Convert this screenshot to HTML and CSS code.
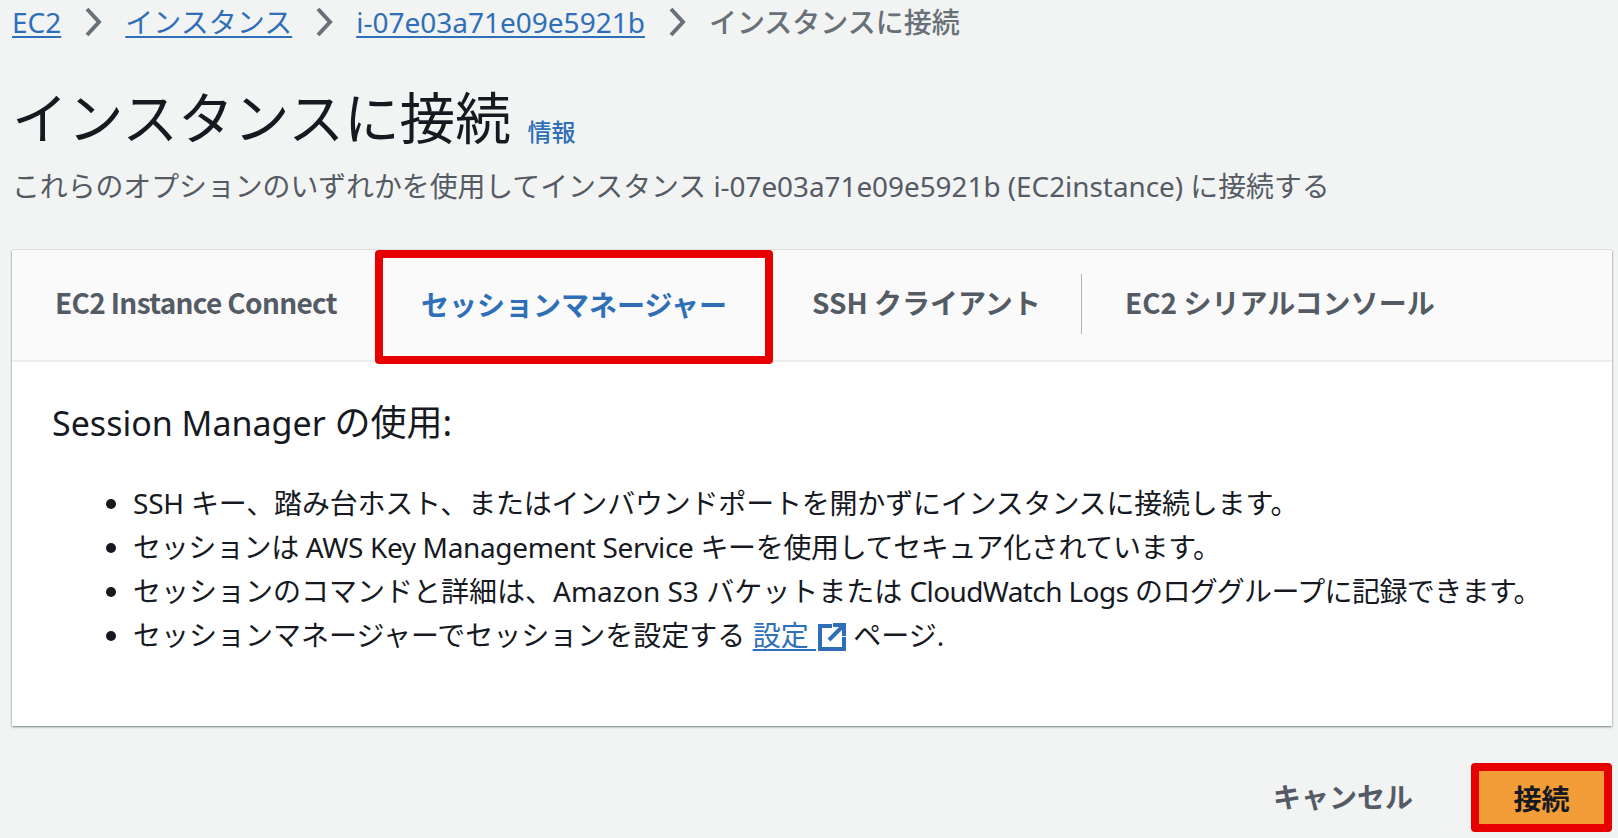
FILE: index.html
```html
<!DOCTYPE html>
<html lang="ja">
<head>
<meta charset="utf-8">
<title>インスタンスに接続</title>
<link rel="stylesheet" href="styles.css">
</head>
<body>
<div class="page">
  <nav class="crumbs">
    <a class="link" href="#">EC2</a>
    <svg class="chev" viewBox="0 0 20 32"><path d="M4 3l12 13L4 29"/></svg>
    <a class="link" href="#">インスタンス</a>
    <svg class="chev" viewBox="0 0 20 32"><path d="M4 3l12 13L4 29"/></svg>
    <a class="link" href="#">i-07e03a71e09e5921b</a>
    <svg class="chev" viewBox="0 0 20 32"><path d="M4 3l12 13L4 29"/></svg>
    <span class="crumb-current">インスタンスに接続</span>
  </nav>
  <header class="head">
    <h1 class="title">インスタンスに接続 <a class="info" href="#">情報</a></h1>
    <p class="sub">これらのオプションのいずれかを使用してインスタンス i-07e03a71e09e5921b (EC2instance) に接続する</p>
  </header>
  <section class="card">
    <div class="tabs">
      <div class="tab tab-first">EC2 Instance Connect</div>
      <div class="tab tab-active">セッションマネージャー</div>
      <div class="tab tab-ssh">SSH クライアント</div>
      <div class="tab tab-last">EC2 シリアルコンソール</div>
    </div>
    <div class="panel">
      <h2 class="panel-title">Session Manager <span class="panel-title-ja">の使用:</span></h2>
      <ul class="list">
        <li class="item-snug">SSH キー、踏み台ホスト、またはインバウンドポートを開かずにインスタンスに接続します。</li>
        <li class="item-tight">セッションは AWS Key Management Service キーを使用してセキュア化されています。</li>
        <li>セッションのコマンドと詳細は、Amazon S3 バケットまたは <span class="run-tight">CloudWatch Logs のロググループに記録できます。</span></li>
        <li>セッションマネージャーでセッションを設定する <a class="link" href="#">設定 <svg class="ext" viewBox="0 0 28 28"><path class="ext-box" d="M14 3H2v23h24V14"/><path class="ext-arrow" d="M11 17L25 3M15 2h11v11"/></svg></a> ページ.</li>
      </ul>
    </div>
  </section>
  <footer class="actions">
    <span class="cancel">キャンセル</span>
    <button class="primary" type="button">接続</button>
  </footer>
</div>
</body>
</html>
```
FILE: styles.css
```css
* { box-sizing: border-box; }
html, body { margin: 0; height: 100%; }
body {
  background: #f2f3f3;
  color: #16191f;
  font-family: "Noto Sans", "Noto Sans CJK JP", sans-serif;
  overflow: hidden;
}
.page {
  height: 838px;
  padding: 0 6px 0 12px;
  display: flex;
  flex-direction: column;
}
.link { color: #2f6fb7; text-decoration: underline; text-underline-offset: 3px; }
.crumbs {
  display: flex;
  align-items: center;
  height: 48px;
  padding-bottom: 4px;
  font-size: 28px;
  line-height: 44px;
}
.chev { width: 20px; height: 32px; margin: 0 22px; flex: none; }
.chev path { fill: none; stroke: #687078; stroke-width: 4; }
.crumb-current { color: #687078; font-weight: 500; font-size: 28px; }
.head { padding-top: 34px; }
.title {
  margin: 0;
  font-size: 55.7px;
  line-height: 70px;
  font-weight: 400;
  color: #16191f;
}
.info { font-size: 24px; font-weight: 500; color: #2f6fb7; text-decoration: none; margin-left: 2px; position: relative; top: 2px; }
.sub {
  margin: 2px 0 0;
  font-size: 27.85px;
  line-height: 38px;
  color: #545b64;
}
.card {
  margin-top: 45px;
  height: 476px;
  background: #fff;
  box-shadow: 0 1px 2px rgba(0,28,36,.5), 0 0 1px rgba(0,28,36,.3);
  display: flex;
  flex-direction: column;
}
.tabs {
  display: flex;
  height: 112px;
  background: #fafafa;
  border-bottom: 2px solid #eaeded;
  align-items: stretch;
}
.tab {
  display: flex;
  align-items: center;
  font-family: "Noto Sans CJK JP", sans-serif;
  font-size: 28px;
  font-weight: 700;
  color: #545b64;
  padding-bottom: 6px;
}
.tab-first { padding-left: 43px; width: 363px; letter-spacing: -.67px; }
.tab-active {
  width: 398px;
  height: 114px;
  justify-content: center;
  color: #2f6fb7;
  background: #fafafa;
  border: 8px solid #e60000;
  border-radius: 4px;
}
.tab-ssh { width: 309px; padding-left: 39px; position: relative; }
.tab-ssh::after {
  content: "";
  position: absolute;
  right: 0;
  top: 24px;
  height: 60px;
  width: 1px;
  background: #aab7b8;
}
.tab-last { padding-left: 43px; }
.panel { padding: 39px 40px 0; }
.panel-title {
  margin: 0;
  font-size: 34px;
  line-height: 44px;
  font-weight: 400;
}
.panel-title-ja { font-size: 36px; }
.list {
  margin: 36px 0 0;
  padding: 0 0 0 81px;
  list-style: disc;
  font-size: 28px;
  line-height: 44px;
}
.item-snug { letter-spacing: -.2px; }
.item-tight { letter-spacing: -.35px; }
.run-tight { letter-spacing: -.6px; }
.ext { width: 28px; height: 28px; vertical-align: -5px; margin-left: 2px; }
.ext-box, .ext-arrow { fill: none; stroke: #2f6fb7; stroke-width: 4; }
.actions {
  display: flex;
  justify-content: flex-end;
  align-items: center;
  margin-top: 37px;
}
.cancel { font-size: 28px; font-weight: 700; color: #545b64; margin-right: 58px; padding-bottom: 4px; }
.primary {
  width: 141px;
  height: 69px;
  background: #f29d38;
  border: 8px solid #e60000;
  border-radius: 4px;
  font: 700 28px "Noto Sans", "Noto Sans CJK JP", sans-serif;
  color: #16191f;
  padding: 0;
}
```
